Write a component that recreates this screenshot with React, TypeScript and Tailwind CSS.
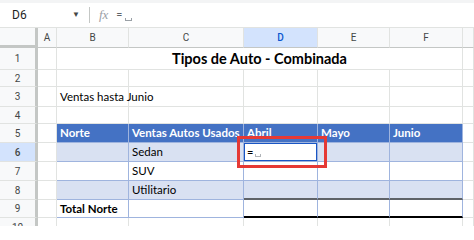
import React from 'react'

const cols = ['A', 'B', 'C', 'D', 'E', 'F', '']
const cellFont = "font-['Lato','Open_Sans',sans-serif]"

function RowHead({ n, active = false }: { n: number; active?: boolean }) {
  return (
    <div
      className={`flex items-center justify-center border-r-[3px] border-b border-r-[#c4c7c5] border-b-[#e1e3e1] text-[10px] text-[#444746] ${
        active ? 'bg-[#d3e3fd] text-[#0b57d0] font-medium' : 'bg-[#f8f9fa]'
      }`}
    >
      {n}
    </div>
  )
}

function Cell({ className = '', children }: { className?: string; children?: React.ReactNode }) {
  return (
    <div className={`flex items-center overflow-hidden whitespace-nowrap border-r border-b border-[#e1e3e1] px-[3px] text-[11.5px] text-black ${cellFont} ${className}`}>
      {children}
    </div>
  )
}

const tb = 'border-r-[#9fb4de] border-b-[#9fb4de]'

export default function App() {
  return (
    <div className="relative h-[226px] w-[474px] overflow-hidden bg-white font-['Roboto',sans-serif]">
      {/* formula bar */}
      <div className="h-[3px] bg-[#f3f4f5]" />
      <div className="flex h-[25px] items-center border-b border-[#e1e3e1]">
        <span className="ml-[12px] w-[50px] text-[12px] text-[#1f1f1f]">D6</span>
        <span className="ml-[10px] text-[8px] text-[#444746]">▼</span>
        <div className="ml-[9px] h-[16px] w-px bg-[#c4c7c5]" />
        <span className="ml-[9px] font-['Liberation_Serif',serif] text-[13px] italic text-[#9aa0a6]">fx</span>
        <span className="ml-[8px] text-[11px] text-[#5f6368]">=</span>
        <span className="ml-[3px] mt-[8px] h-[3px] w-[7px] border-x border-b border-[#9aa0a6]" />
      </div>

      {/* grid */}
      <div className="grid grid-cols-[38px_19px_72px_115px_74px_72px_73px_1fr] grid-rows-[20px_22px_17px_20px_17px_19px_19px_19px_19px_18px_20px]">
        {/* column heads */}
        <div className="border-r-[3px] border-b-[3px] border-[#c4c7c5] bg-[#f8f9fa]" />
        {cols.map((c, i) => (
          <div
            key={i}
            className={`flex items-center justify-center border-r border-b border-r-[#e1e3e1] border-b-[#c4c7c5] text-[10px] ${
              c === 'D' ? 'bg-[#d3e3fd] text-[#0b57d0] font-medium' : 'bg-[#f8f9fa] text-[#444746]'
            }`}
          >
            {c}
          </div>
        ))}

        {/* row 1 */}
        <RowHead n={1} />
        <Cell />
        <Cell className="col-span-5 justify-center text-[14.5px] font-bold">Tipos de Auto - Combinada</Cell>
        <Cell />

        {/* row 2 */}
        <RowHead n={2} />
        {cols.map((_, i) => <Cell key={i} />)}

        {/* row 3 */}
        <RowHead n={3} />
        <Cell />
        <Cell className="overflow-visible">Ventas hasta Junio</Cell>
        {cols.slice(2).map((_, i) => <Cell key={i} />)}

        {/* row 4 */}
        <RowHead n={4} />
        {cols.map((_, i) => <Cell key={i} />)}

        {/* row 5 */}
        <RowHead n={5} />
        <Cell />
        <Cell className={`bg-[#4472c4] font-bold text-white ${tb}`}>Norte</Cell>
        <Cell className={`bg-[#4472c4] font-bold text-white ${tb}`}>Ventas Autos Usados</Cell>
        <Cell className={`bg-[#4472c4] font-bold text-white ${tb}`}>Abril</Cell>
        <Cell className={`bg-[#4472c4] font-bold text-white ${tb}`}>Mayo</Cell>
        <Cell className={`bg-[#4472c4] font-bold text-white ${tb}`}>Junio</Cell>
        <Cell />

        {/* row 6 */}
        <RowHead n={6} active />
        <Cell />
        <Cell className={`bg-[#d9e1f2] ${tb}`} />
        <Cell className={`bg-[#d9e1f2] ${tb}`}>Sedan</Cell>
        <Cell className={`relative bg-white ${tb}`}>
          <div className="absolute inset-[-1px] border-2 border-[#1a56c4]" />
          <span className="relative text-[11px]">=</span>
          <span className="relative ml-[2px] mt-[7px] h-[3px] w-[6px] border-x border-b border-[#b0b4b8]" />
        </Cell>
        <Cell className={`bg-[#d9e1f2] ${tb}`} />
        <Cell className={`bg-[#d9e1f2] ${tb}`} />
        <Cell />

        {/* row 7 */}
        <RowHead n={7} />
        <Cell />
        <Cell className={tb} />
        <Cell className={tb}>SUV</Cell>
        <Cell className={tb} />
        <Cell className={tb} />
        <Cell className={tb} />
        <Cell />

        {/* row 8 */}
        <RowHead n={8} />
        <Cell />
        <Cell className={`bg-[#d9e1f2] ${tb}`} />
        <Cell className={`bg-[#d9e1f2] ${tb}`}>Utilitario</Cell>
        <Cell className="bg-[#d9e1f2] border-r-[#9fb4de] border-b-2 border-b-[#5f6368]" />
        <Cell className="bg-[#d9e1f2] border-r-[#9fb4de] border-b-2 border-b-[#5f6368]" />
        <Cell className="bg-[#d9e1f2] border-r-[#9fb4de] border-b-2 border-b-[#5f6368]" />
        <Cell />

        {/* row 9 */}
        <RowHead n={9} />
        <Cell />
        <Cell className={`font-bold ${tb}`}>Total Norte</Cell>
        <Cell className={tb} />
        <Cell className="border-r-[#9fb4de] border-b-2 border-b-black" />
        <Cell className="border-r-[#9fb4de] border-b-2 border-b-black" />
        <Cell className="border-r-[#9fb4de] border-b-2 border-b-black" />
        <Cell />

        {/* row 10 */}
        <RowHead n={10} />
        {cols.map((_, i) => <Cell key={i} />)}
      </div>

      {/* highlight box */}
      <div className="absolute left-[237px] top-[136px] h-[32px] w-[90px] border-[3px] border-[#e53935]" />
    </div>
  )
}
